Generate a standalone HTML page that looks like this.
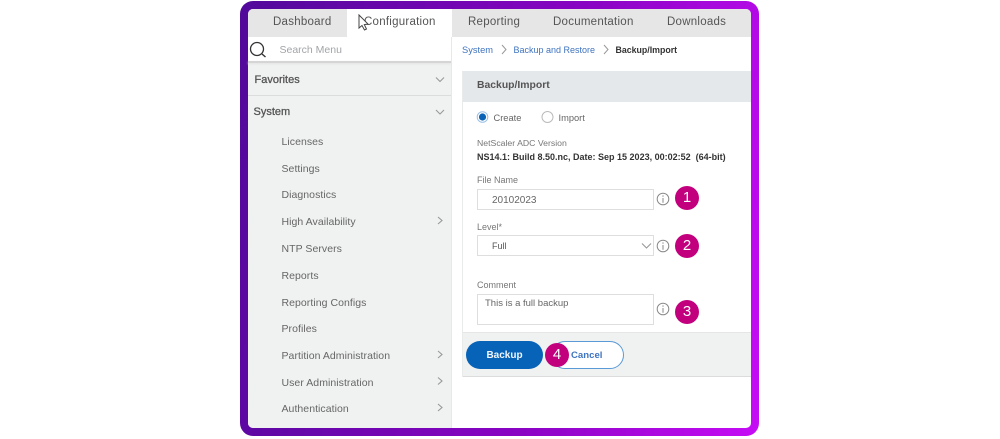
<!DOCTYPE html>
<html><head><meta charset="utf-8">
<style>
html,body{margin:0;padding:0;background:#fff;}
#p{position:relative;width:1000px;height:439px;overflow:hidden;background:#fff;font-family:"Liberation Sans",sans-serif;filter:blur(0.35px);}
#f{position:absolute;left:240px;top:1px;width:519px;height:435px;border-radius:13px;background:linear-gradient(100deg,#51099a 0%,#8a04c4 60%,#c60cf5 100%);}
#i{position:absolute;left:248px;top:9px;width:503px;height:419px;border-radius:5px;background:#fff;overflow:hidden;}
.a{position:absolute;}
.t{position:absolute;white-space:nowrap;line-height:14px;}
.tab{font-size:11.5px;color:#555;letter-spacing:.25px;}
.m{font-size:10.5px;color:#666;left:281.5px;letter-spacing:.05px;}
.l{font-size:9.5px;color:#777;}
.n{position:absolute;width:24px;height:24px;border-radius:50%;background:#c2007d;color:#fff;font-size:15px;line-height:24px;text-align:center;}
svg{position:absolute;overflow:visible;}
</style></head><body>
<div id="p">
<div id="f"></div>
<div id="i"></div>
<!-- tabs -->
<div class="a" style="left:248px;top:9px;width:503px;height:28px;background:#e6e6e6;border-radius:5px 5px 0 0;"></div>
<div class="a" style="left:347px;top:9px;width:105px;height:28px;background:#fff;"></div>
<div class="t tab" style="left:273px;top:15px;">Dashboard</div>
<div class="t tab" style="left:364px;top:15px;">Configuration</div>
<div class="t tab" style="left:468px;top:15px;">Reporting</div>
<div class="t tab" style="left:553px;top:15px;">Documentation</div>
<div class="t tab" style="left:667px;top:15px;">Downloads</div>
<!-- cursor -->
<svg style="left:0;top:0" width="1000" height="439"><path d="M359 15 L359 28 L362 25.5 L364.5 30 L366.5 29 L364.3 24.6 L368 24 Z" fill="#fff" stroke="#444" stroke-width="1"/></svg>
<!-- sidebar -->
<div class="a" style="left:248px;top:62px;width:203px;height:366px;background:#f0f1f1;border-radius:0 0 0 5px;"></div>
<div class="a" style="left:248px;top:61px;width:203px;height:2px;background:#d5d5d5;box-shadow:0 1px 2px #e2e2e2;"></div>
<div class="a" style="left:451px;top:37px;width:1px;height:391px;background:#e8e8e8;"></div>
<svg style="left:0;top:0" width="1000" height="439"><circle cx="257" cy="49" r="6.5" fill="none" stroke="#333" stroke-width="1.3"/><path d="M262 54 L265.5 57" stroke="#333" stroke-width="1.4" fill="none"/></svg>
<div class="t" style="left:279.5px;top:43px;font-size:10.5px;color:#a2a4a8;">Search Menu</div>
<div class="t" style="left:254.5px;top:73px;font-size:11px;color:#555;-webkit-text-stroke:.3px #555;">Favorites</div>
<div class="a" style="left:248px;top:95px;width:203px;height:1px;background:#dcdcdc;"></div>
<div class="t" style="left:253.5px;top:105px;font-size:11px;color:#555;-webkit-text-stroke:.3px #555;">System</div>
<svg style="left:0;top:0" width="1000" height="439" fill="none" stroke="#999" stroke-width="1.1">
<path d="M436 77.5 L440 81.5 L444 77.5"/><path d="M436 110 L440 114 L444 110"/>
<path d="M438 217 L442 220.5 L438 224"/><path d="M438 351 L442 354.5 L438 358"/><path d="M438 377.5 L442 381 L438 384.5"/><path d="M438 404 L442 407.5 L438 411"/>
</svg>
<div class="t m" style="top:134.5px;">Licenses</div>
<div class="t m" style="top:161.5px;">Settings</div>
<div class="t m" style="top:187.5px;">Diagnostics</div>
<div class="t m" style="top:214.5px;">High Availability</div>
<div class="t m" style="top:241.5px;">NTP Servers</div>
<div class="t m" style="top:268.5px;">Reports</div>
<div class="t m" style="top:295.5px;">Reporting Configs</div>
<div class="t m" style="top:321.5px;">Profiles</div>
<div class="t m" style="top:348.5px;">Partition Administration</div>
<div class="t m" style="top:375.5px;">User Administration</div>
<div class="t m" style="top:401.5px;">Authentication</div>
<!-- breadcrumb -->
<div class="t" style="left:462px;top:43px;font-size:9.3px;color:#3f74c0;">System</div>
<div class="t" style="left:513.5px;top:43px;font-size:9px;color:#3f74c0;">Backup and Restore</div>
<div class="t" style="left:615.5px;top:43px;font-size:8.8px;color:#333;font-weight:bold;">Backup/Import</div>
<svg style="left:0;top:0" width="1000" height="439" fill="none" stroke="#999" stroke-width="1"><path d="M502 45 L506 49.5 L502 54"/><path d="M604 45 L608 49.5 L604 54"/></svg>
<!-- panel -->
<div class="a" style="left:462px;top:71px;width:289px;height:306px;background:#fff;border-left:1px solid #e9eaea;box-sizing:border-box;"></div>
<div class="a" style="left:463px;top:71px;width:288px;height:31px;background:#e4e8ea;"></div>
<div class="t" style="left:477px;top:79px;font-size:10.4px;color:#555;font-weight:bold;">Backup/Import</div>
<svg style="left:0;top:0" width="1000" height="439"><circle cx="482.5" cy="117" r="5.3" fill="#fff" stroke="#9cc0e4" stroke-width="1"/><circle cx="482.5" cy="117" r="3.6" fill="#0b63b8"/><circle cx="547.5" cy="117" r="5.5" fill="#fff" stroke="#bbb" stroke-width="1"/></svg>
<div class="t l" style="left:493.5px;top:111px;color:#666;font-size:9.3px;">Create</div>
<div class="t l" style="left:558.5px;top:111px;color:#666;font-size:9.3px;">Import</div>
<div class="t l" style="left:477px;top:136px;font-size:8.7px;">NetScaler ADC Version</div>
<div class="t" style="left:477px;top:150px;font-size:9px;font-weight:bold;color:#333;white-space:pre;">NS14.1: Build 8.50.nc, Date: Sep 15 2023, 00:02:52  (64-bit)</div>
<div class="t l" style="left:477px;top:173px;font-size:9px;">File Name</div>
<div class="a" style="left:477px;top:189px;width:177px;height:21px;border:1px solid #dedede;box-sizing:border-box;"></div>
<div class="t" style="left:492px;top:194px;font-size:10px;color:#666;">20102023</div>
<div class="t l" style="left:477px;top:220px;font-size:9px;">Level*</div>
<div class="a" style="left:477px;top:235px;width:177px;height:21px;border:1px solid #dedede;box-sizing:border-box;"></div>
<div class="t" style="left:492px;top:239px;font-size:9px;color:#555;">Full</div>
<svg style="left:0;top:0" width="1000" height="439" fill="none" stroke="#999" stroke-width="1.1"><path d="M642 243.5 L646.5 248 L651 243.5"/></svg>
<div class="t l" style="left:477px;top:278px;font-size:9px;">Comment</div>
<div class="a" style="left:477px;top:294px;width:177px;height:31px;border:1px solid #dedede;box-sizing:border-box;"></div>
<div class="t" style="left:485px;top:297px;font-size:9.5px;color:#666;">This is a full backup</div>
<!-- info icons -->
<svg style="left:0;top:0" width="1000" height="439" fill="none" stroke="#888" stroke-width="1">
<circle cx="663" cy="199" r="5.8"/><path d="M663 198 V202.8 M663 195.4 V196.8"/>
<circle cx="663" cy="246" r="5.8"/><path d="M663 245 V249.8 M663 242.4 V243.8"/>
<circle cx="663" cy="309" r="5.8"/><path d="M663 308 V312.8 M663 305.4 V306.8"/>
</svg>
<div class="n" style="left:675px;top:186px;">1</div>
<div class="n" style="left:675px;top:234px;">2</div>
<div class="n" style="left:675px;top:300px;">3</div>
<!-- footer -->
<div class="a" style="left:463px;top:332px;width:288px;height:45px;background:#f0f1f1;border-top:1px solid #e6e6e6;border-bottom:1px solid #dcdcdc;box-sizing:border-box;"></div>
<div class="a" style="left:551px;top:341px;width:73px;height:28px;border:1px solid #5a9ad6;border-radius:15px;background:#fff;box-sizing:border-box;"></div>
<div class="a" style="left:466px;top:341px;width:77px;height:28px;border-radius:15px;background:#0763b8;"></div>
<div class="t" style="left:466px;top:349px;width:77px;text-align:center;font-size:10px;font-weight:bold;color:#f2f6fb;">Backup</div>
<div class="t" style="left:571px;top:349px;font-size:9.6px;font-weight:bold;color:#3f74c0;">Cancel</div>
<div class="n" style="left:545px;top:343px;">4</div>
</div>
</body></html>
